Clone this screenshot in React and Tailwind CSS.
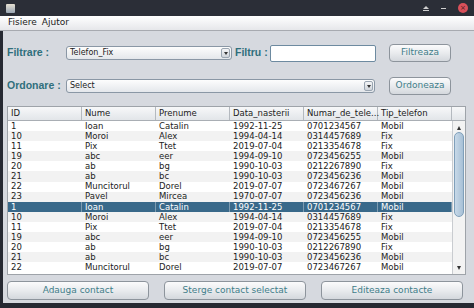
const rows = [
  ["1", "Ioan", "Catalin", "1992-11-25", "0701234567", "Mobil"],
  ["10", "Moroi", "Alex", "1994-04-14", "0314457689", "Fix"],
  ["11", "Pix", "Ttet", "2019-07-04", "0213354678", "Fix"],
  ["19", "abc", "eer", "1994-09-10", "0723456255", "Mobil"],
  ["20", "ab", "bg", "1990-10-03", "0212267890", "Fix"],
  ["21", "ab", "bc", "1990-10-03", "0723456236", "Mobil"],
  ["22", "Muncitorul", "Dorel", "2019-07-07", "0723467267", "Mobil"],
  ["23", "Pavel", "Mircea", "1970-07-07", "0723456236", "Mobil"],
  ["1", "Ioan", "Catalin", "1992-11-25", "0701234567", "Mobil"],
  ["10", "Moroi", "Alex", "1994-04-14", "0314457689", "Fix"],
  ["11", "Pix", "Ttet", "2019-07-04", "0213354678", "Fix"],
  ["19", "abc", "eer", "1994-09-10", "0723456255", "Mobil"],
  ["20", "ab", "bg", "1990-10-03", "0212267890", "Fix"],
  ["21", "ab", "bc", "1990-10-03", "0723456236", "Mobil"],
  ["22", "Muncitorul", "Dorel", "2019-07-07", "0723467267", "Mobil"],
];

const headers = ["ID", "Nume", "Prenume", "Data_nasterii", "Numar_de_tele...", "Tip_telefon"];

const label = "whitespace-nowrap font-['Liberation_Sans',sans-serif] text-[10.5px] font-bold text-[#2f6f7c]";

function Combo({ text, width }) {
  return (
    <div
      className="flex h-[14px] items-center rounded-[3px] border border-[#8a97a5] bg-gradient-to-b from-[#fdfdfd] to-[#e4e7eb]"
      style={{ width }}
    >
      <span className="flex-1 pl-[3px] text-[8px] leading-none text-[#222]">{text}</span>
      <div className="mr-[1px] flex h-[10px] w-[9px] items-center justify-center rounded-[2px] border border-[#9aa5b1] bg-gradient-to-b from-[#f4f5f7] to-[#cfd4da]">
        <div className="h-0 w-0 border-x-[2px] border-t-[3px] border-x-transparent border-t-[#333]" />
      </div>
    </div>
  );
}

function Btn({ children, className }) {
  return (
    <div
      className={
        "flex items-center justify-center whitespace-nowrap rounded-[4px] border border-[#8d949c] bg-gradient-to-b from-[#fbfbfc] via-[#e9ebee] to-[#d4d8dd] text-[9px] text-[#3f7d89] " +
        className
      }
    >
      {children}
    </div>
  );
}

export default function App() {
  return (
    <div
      className="flex h-[308px] w-[474px] flex-col overflow-hidden bg-[#262932]"
      style={{ fontFamily: "'DejaVu Sans', sans-serif" }}
    >
      {/* title bar */}
      <div className="flex h-[16px] items-center bg-[#2b2e37] px-[6px]">
        <div className="h-[9px] w-[9px] rounded-[1px] bg-gradient-to-b from-[#e6e0d2] to-[#9aa6b4]" />
        <div className="flex-1" />
        <div className="mr-[12px] flex flex-col items-center">
          <div className="h-0 w-0 border-x-[3px] border-b-[3px] border-x-transparent border-b-[#d0d0d0]" />
          <div className="mt-[1px] h-[1px] w-[6px] bg-[#d0d0d0]" />
        </div>
        <div className="mr-[12px] h-[1px] w-[5px] bg-[#d0d0d0]" />
        <div className="flex h-[10px] w-[10px] items-center justify-center rounded-full bg-[#d9505a] text-[7px] leading-none text-[#4a1a1e]">
          ×
        </div>
      </div>
      {/* menu bar */}
      <div className="flex h-[15px] items-center gap-[5px] border-b border-[#a7aab0] bg-gradient-to-b from-[#ffffff] to-[#e6e7ea] pl-[8px] text-[9px] text-[#222]">
        <span>Fisiere</span>
        <span>Ajutor</span>
      </div>
      <div className="flex flex-1">
        <div className="w-[3px]" />
        <div className="flex flex-1 flex-col bg-[#d6d9df] pl-[4px] pr-[8px] pt-[13px]">
          {/* filter row */}
          <div className="flex h-[18px] items-center">
            <span className={"w-[59px] " + label}>Filtrare :</span>
            <Combo text="Telefon_Fix" width={166} />
            <span className={"ml-[3px] w-[35px] " + label}>Filtru :</span>
            <div className="h-[17px] w-[106px] rounded-[2px] border border-[#6d8aa0] bg-white" />
            <Btn className="ml-[13px] h-[18px] w-[62px]">Filtreaza</Btn>
          </div>
          {/* sort row */}
          <div className="mt-[15px] flex h-[18px] items-center">
            <span className={"w-[59px] " + label}>Ordonare :</span>
            <Combo text="Select" width={309} />
            <Btn className="ml-[14px] h-[18px] w-[62px]">Ordoneaza</Btn>
          </div>
          {/* table */}
          <div className="mt-[11px] flex h-[169px] w-[459px] flex-col border border-[#9ea3a9] bg-white">
            <div className="flex h-[14px] border-b border-[#a9aeb4] bg-gradient-to-b from-[#f7f8f9] to-[#e2e5e9]">
              {headers.map((h, i) => (
                <div
                  key={i}
                  className="flex w-[74px] items-center whitespace-nowrap border-r border-[#b4b9bf] pl-[3px] text-[8.5px] text-[#222]"
                >
                  {h}
                </div>
              ))}
              <div className="flex-1" />
            </div>
            <div className="flex flex-1 overflow-hidden">
              <div className="flex w-[444px] flex-col">
                {rows.map((r, i) => {
                  const sel = i === 8;
                  const bg = sel ? "bg-[#39698a] text-white" : i % 2 ? "bg-[#f2f2f2] text-[#222]" : "bg-white text-[#222]";
                  return (
                    <div key={i} className={"flex h-[10.1px] " + bg}>
                      {r.map((c, j) => (
                        <div
                          key={j}
                          className={
                            "flex w-[74px] items-center pl-[3px] text-[8.5px] leading-none " +
                            (sel ? "border-r border-[#7d9bb1]" : "")
                          }
                        >
                          {c}
                        </div>
                      ))}
                    </div>
                  );
                })}
              </div>
              {/* scrollbar */}
              <div className="flex w-[14px] flex-col items-center border-l border-[#c9ccd0] bg-[#f3f3f3]">
                <div className="mt-[5px] h-0 w-0 border-x-[2px] border-b-[4px] border-x-transparent border-b-[#333]" />
                <div className="mt-[2px] h-[85px] w-[10px] rounded-[5px] border border-[#7f9fba] bg-gradient-to-r from-[#c8d9e8] to-[#a7c0d6]" />
                <div className="flex-1" />
                <div className="mb-[4px] h-0 w-0 border-x-[2px] border-t-[4px] border-x-transparent border-t-[#333]" />
              </div>
            </div>
          </div>
          {/* bottom buttons */}
          <div className="mt-[6px] flex h-[19px] gap-[15px]">
            <Btn className="h-[19px] w-[142px]">Adauga contact</Btn>
            <Btn className="h-[19px] w-[142px]">Sterge contact selectat</Btn>
            <Btn className="h-[19px] w-[142px]">Editeaza contacte</Btn>
          </div>
          <div className="flex-1" />
        </div>
      </div>
      <div className="h-[5px]" />
    </div>
  );
}
